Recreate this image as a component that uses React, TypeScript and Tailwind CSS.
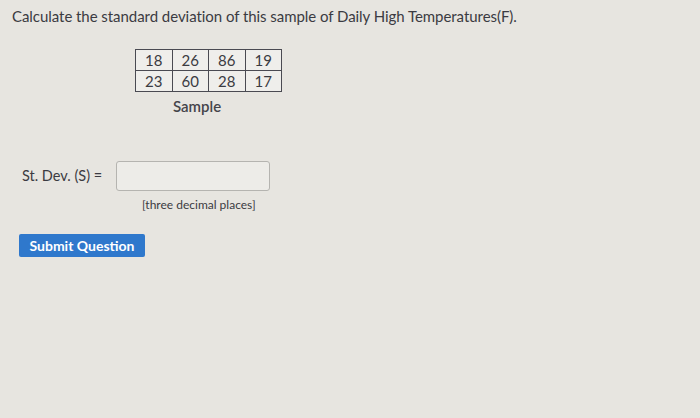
export default function App() {
  const rows = [
    [18, 26, 86, 19],
    [23, 60, 28, 17],
  ];
  return (
    <div
      className="w-[700px] h-[418px] bg-[#e7e5e0] text-[#3b3b42] overflow-hidden"
      style={{ fontFamily: "Lato, 'Open Sans', sans-serif" }}
    >
      <div className="pl-[12px] pt-[6px] text-[15px] leading-[20px] tracking-[-0.05px]">
        Calculate the standard deviation of this sample of Daily High Temperatures(F).
      </div>
      <div className="pl-[135px] pt-[23px]">
        <table className="border-collapse border border-[#4a4a52] text-[15px] leading-[19px]">
          <tbody>
            {rows.map((r, i) => (
              <tr key={i}>
                {r.map((v, j) => (
                  <td
                    key={j}
                    className="border border-[#4a4a52] bg-[#efeeeb] w-[36.5px] h-[21px] text-center p-0"
                  >
                    {v}
                  </td>
                ))}
              </tr>
            ))}
          </tbody>
        </table>
        <div className="pl-[38px] pt-[4px] text-[15px] leading-[20px] font-semibold text-[#44444a]">
          Sample
        </div>
      </div>
      <div className="flex items-center pl-[22px] pt-[45px]">
        <span className="text-[14.5px] w-[94px]">St. Dev. (S) =</span>
        <div className="w-[154px] h-[30px] rounded-[3px] border border-[#b5b4b0] bg-[#edece8]" />
      </div>
      <div className="pl-[142px] pt-[6px] text-[12px] leading-[16px] text-[#3b3b42]">
        [three decimal places]
      </div>
      <div className="pl-[19px] pt-[20px]">
        <button className="w-[126px] h-[23px] bg-[#2f78cc] rounded-[2px] text-white text-[14px] font-bold leading-[23px] text-center">
          Submit Question
        </button>
      </div>
    </div>
  );
}
